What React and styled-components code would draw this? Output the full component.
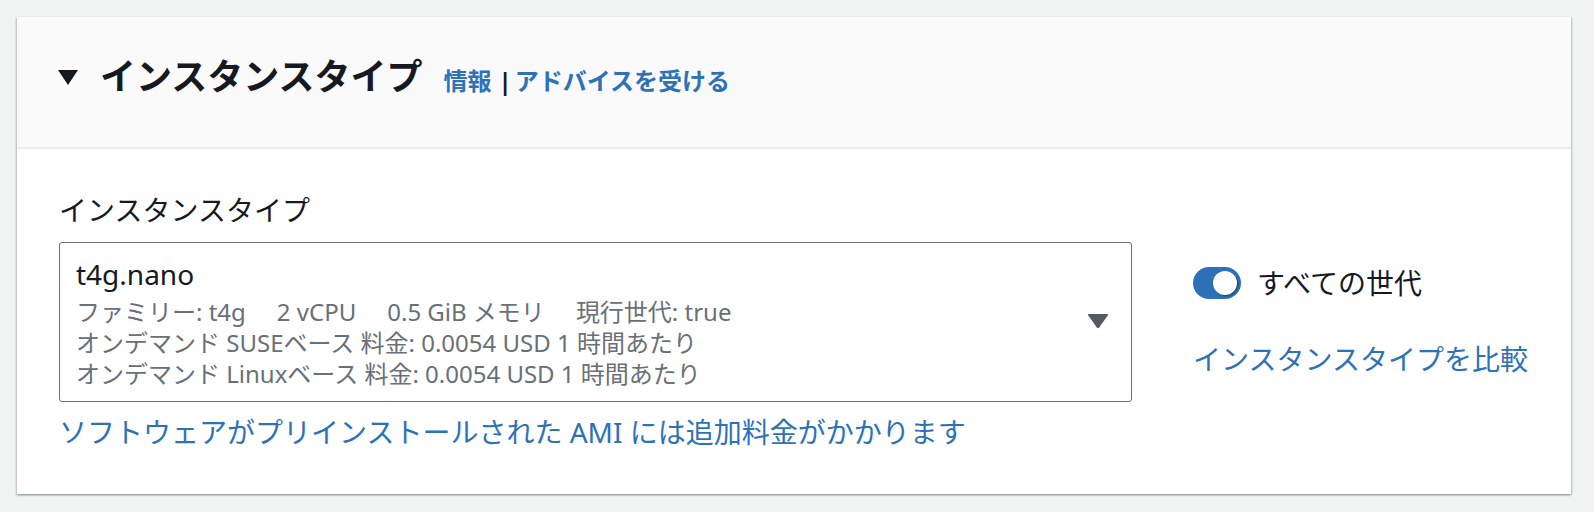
import React, { useState } from 'react';
import styled, { createGlobalStyle } from 'styled-components';

const FONT = `"Noto Sans", "Noto Sans CJK JP", sans-serif`;
const BLUE = '#2d72b8';

const GlobalStyle = createGlobalStyle`
  body {
    margin: 0;
    background: #f2f3f3;
    font-family: ${FONT};
    color: #16191f;
  }
`;

const Page = styled.div`
  padding: 17px 23px 19px 17px;
`;

const Card = styled.section`
  background: #fff;
  box-shadow: 0 1px 2px rgba(0, 28, 36, 0.3), 1px 1px 2px rgba(0, 28, 36, 0.15),
    -1px 1px 2px rgba(0, 28, 36, 0.15);
`;

const Header = styled.header`
  display: flex;
  align-items: center;
  height: 132px;
  padding: 0 41px 10px;
  box-sizing: border-box;
  background: #fafafa;
  border-bottom: 2px solid #eaeded;
`;

const Expand = styled.svg`
  width: 20px;
  height: 15px;
  margin-right: 22px;
  flex-shrink: 0;
`;

const TitleGroup = styled.div`
  display: flex;
  align-items: baseline;
`;

const Title = styled.h2`
  margin: 0;
  font-size: 36px;
  line-height: 44px;
  font-weight: 700;
  color: #16191f;
`;

const HeaderLinks = styled.span`
  margin-left: 21px;
  font-size: 24px;
  font-weight: 700;
`;

const Link = styled.a`
  color: ${BLUE};
  text-decoration: none;
  font-weight: ${(p) => (p.$bold ? 700 : 400)};
  cursor: pointer;
`;

const Sep = styled.span`
  color: #16191f;
  margin: 0 3px 0 7px;
`;

const Body = styled.div`
  display: flex;
  padding: 39px 42px 40px;
`;

const Field = styled.div`
  width: 1073px;
  flex-shrink: 0;
`;

const Label = styled.div`
  font-size: 28px;
  line-height: 44px;
  margin-bottom: 10px;
`;

const Select = styled.div`
  display: flex;
  align-items: center;
  border: 1px solid #687078;
  border-radius: 3px;
  padding: 10px 22px 12px 16px;
  cursor: pointer;
`;

const SelectText = styled.div`
  flex: 1;
`;

const Value = styled.div`
  font-size: 28px;
  line-height: 43px;
  color: #16191f;
`;

const Detail = styled.div`
  display: flex;
  gap: 31px;
  font-size: 24px;
  line-height: 31px;
  color: #687078;
`;

const Caret = styled.svg`
  width: 22px;
  height: 16px;
  flex-shrink: 0;
`;

const Constraint = styled.div`
  margin-top: 8px;
  font-size: 28px;
  line-height: 44px;
`;

const Side = styled.div`
  display: flex;
  flex-direction: column;
  margin-left: 61px;
  padding-top: 73px;
  gap: 32px;
`;

const ToggleRow = styled.label`
  display: flex;
  align-items: center;
  gap: 16px;
  font-size: 28px;
  line-height: 44px;
  cursor: pointer;
`;

const Track = styled.span`
  position: relative;
  width: 48px;
  height: 32px;
  border-radius: 16px;
  background: ${(p) => (p.$on ? BLUE : '#687078')};
  flex-shrink: 0;
`;

const Knob = styled.span`
  position: absolute;
  top: 4px;
  left: ${(p) => (p.$on ? '20px' : '4px')};
  width: 24px;
  height: 24px;
  border-radius: 50%;
  background: #fff;
  box-shadow: 1px 1px 2px rgba(0, 28, 36, 0.5);
`;

const SideLink = styled.div`
  font-size: 28px;
  line-height: 44px;
`;

export default function App() {
  const [allGen, setAllGen] = useState(true);

  return (
    <>
      <GlobalStyle />
      <Page>
        <Card>
          <Header>
            <Expand viewBox="0 0 20 15">
              <path d="M0 0 H20 L10 15 Z" fill="#16191f" />
            </Expand>
            <TitleGroup>
              <Title>インスタンスタイプ</Title>
              <HeaderLinks>
                <Link $bold>情報</Link>
                <Sep>|</Sep>
                <Link $bold>アドバイスを受ける</Link>
              </HeaderLinks>
            </TitleGroup>
          </Header>
          <Body>
            <Field>
              <Label>インスタンスタイプ</Label>
              <Select>
                <SelectText>
                  <Value>t4g.nano</Value>
                  <Detail>
                    <span>ファミリー: t4g</span>
                    <span>2 vCPU</span>
                    <span>0.5 GiB メモリ</span>
                    <span>現行世代: true</span>
                  </Detail>
                  <Detail>オンデマンド SUSEベース 料金: 0.0054 USD 1 時間あたり</Detail>
                  <Detail>オンデマンド Linuxベース 料金: 0.0054 USD 1 時間あたり</Detail>
                </SelectText>
                <Caret viewBox="0 0 22 16">
                  <path
                    d="M2 1 H20 Q21.5 1 20.7 2.4 L12.2 14.6 Q11 16 9.8 14.6 L1.3 2.4 Q0.5 1 2 1 Z"
                    fill="#545b64"
                  />
                </Caret>
              </Select>
              <Constraint>
                <Link>ソフトウェアがプリインストールされた AMI には追加料金がかかります</Link>
              </Constraint>
            </Field>
            <Side>
              <ToggleRow onClick={() => setAllGen(!allGen)}>
                <Track $on={allGen}>
                  <Knob $on={allGen} />
                </Track>
                すべての世代
              </ToggleRow>
              <SideLink>
                <Link>インスタンスタイプを比較</Link>
              </SideLink>
            </Side>
          </Body>
        </Card>
      </Page>
    </>
  );
}
